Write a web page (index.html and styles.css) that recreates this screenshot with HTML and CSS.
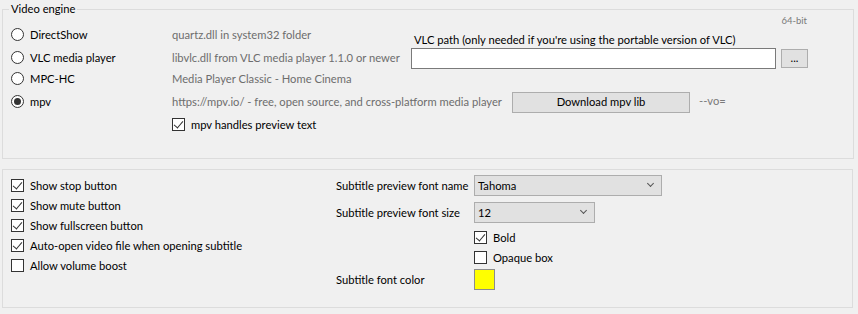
FILE: index.html
```html
<!DOCTYPE html>
<html>
<head>
<meta charset="utf-8">
<link rel="stylesheet" href="styles.css">
</head>
<body>
<div class="page">
  <section class="group group-engine">
    <div class="legend">Video engine</div>
    <div class="engine-grid">
      <div class="right-block">
        <div class="bitness">64-bit</div>
        <div class="vlc-label">VLC path (only needed if you're using the portable version of VLC)</div>
        <div class="vlc-row">
          <div class="textbox"></div>
          <div class="btn btn-browse">...</div>
        </div>
      </div>

      <div class="opt row1"><span class="radio"></span><span>DirectShow</span></div>
      <div class="desc row1">quartz.dll in system32 folder</div>

      <div class="opt row2"><span class="radio"></span><span>VLC media player</span></div>
      <div class="desc row2">libvlc.dll from VLC media player 1.1.0 or newer</div>

      <div class="opt row3"><span class="radio"></span><span>MPC-HC</span></div>
      <div class="desc row3">Media Player Classic - Home Cinema</div>

      <div class="opt row4"><span class="radio checked"></span><span>mpv</span></div>
      <div class="desc desc-wide row4">https://mpv.io/ - free, open source, and cross-platform media player</div>
      <div class="mpv-actions row4">
        <div class="btn btn-download">Download mpv lib</div>
        <span class="vo">--vo=</span>
      </div>

      <div class="opt opt-mpv row5"><span class="check checked"></span><span>mpv handles preview text</span></div>
    </div>
  </section>

  <section class="group group-misc">
    <div class="misc-left">
      <div class="opt line"><span class="check checked"></span><span>Show stop button</span></div>
      <div class="opt line"><span class="check checked"></span><span>Show mute button</span></div>
      <div class="opt line"><span class="check checked"></span><span>Show fullscreen button</span></div>
      <div class="opt line"><span class="check checked"></span><span>Auto-open video file when opening subtitle</span></div>
      <div class="opt line"><span class="check"></span><span>Allow volume boost</span></div>
    </div>
    <div class="misc-right">
      <div class="field field-name">
        <span class="field-label">Subtitle preview font name</span>
        <div class="combo combo-name"><span>Tahoma</span><span class="chev"></span></div>
      </div>
      <div class="field field-size">
        <span class="field-label">Subtitle preview font size</span>
        <div class="combo combo-size"><span>12</span><span class="chev"></span></div>
      </div>
      <div class="field field-bold">
        <div class="opt"><span class="check checked"></span><span>Bold</span></div>
      </div>
      <div class="field field-opaque">
        <div class="opt"><span class="check"></span><span>Opaque box</span></div>
      </div>
      <div class="field field-color">
        <span class="field-label">Subtitle font color</span>
        <div class="swatch"></div>
      </div>
    </div>
  </section>
</div>
</body>
</html>
```

FILE: styles.css
```css
* { box-sizing: border-box; }
html, body {
  margin: 0;
  padding: 0;
  background: #f0f0f0;
}
body {
  font-family: "Lato", "Noto Sans", sans-serif;
  font-size: 11.2px;
  color: #000;
  line-height: 16px;
}
.page {
  padding-left: 2px;
  width: 858px;
  height: 314px;
  overflow: hidden;
}
.group {
  border: 1px solid #dcdcdc;
}
.group-engine {
  margin-top: 9px;
  width: 852px;
  height: 150px;
}
.legend {
  margin: -9px 0 0 6px;
  padding: 0 2px;
  background: #f0f0f0;
  width: fit-content;
  line-height: 16px;
}
.engine-grid {
  display: grid;
  padding-left: 8px;
  grid-template-columns: 161px 239px 101px 1fr;
  grid-template-rows: 6px 22px 24px 18px 28px 18px;
  align-items: center;
}
.engine-grid > .opt, .engine-grid > .desc { padding-top: 1px; }
.right-block {
  grid-column: 3 / 5;
  grid-row: 1 / 4;
  align-self: start;
  display: flex;
  flex-direction: column;
}
.bitness {
  margin-top: -2px;
  line-height: 12px;
  font-size: 9.5px;
  color: #7a7a7a;
  text-align: right;
  padding-right: 46px;
}
.vlc-label {
  margin-top: 5px;
  padding-left: 3px;
  white-space: nowrap;
}
.vlc-row {
  margin-top: 0px;
  display: flex;
  align-items: center;
}
.textbox {
  width: 365px;
  height: 21px;
  background: #fff;
  border: 1px solid #7a7a7a;
}
.btn {
  background: #e1e1e1;
  border: 1px solid #adadad;
  display: flex;
  align-items: center;
  justify-content: center;
}
.btn-browse {
  margin-left: 5px;
  width: 27px;
  height: 19px;
  line-height: 14px;
  padding-bottom: 2px;
}
.row1 { grid-row: 2; }
.row2 { grid-row: 3; }
.row3 { grid-row: 4; }
.row4 { grid-row: 5; }
.row5 { grid-row: 6; }
.opt {
  display: flex;
  align-items: center;
  white-space: nowrap;
}
.opt > span:last-child { padding-top: 1px; }
.engine-grid > .opt { grid-column: 1; }
.engine-grid > .opt-mpv { grid-column: 2 / 5; }
.desc {
  grid-column: 2;
  color: #6d6d6d;
  white-space: nowrap;
}
.desc-wide { grid-column: 2 / 4; }
.mpv-actions {
  grid-column: 4;
  display: flex;
  align-items: center;
}
.btn-download {
  width: 178px;
  height: 21px;
  margin-top: 2px;
}
.vo {
  margin-left: 9px;
  color: #7a7a7a;
}
.radio {
  width: 13px;
  height: 13px;
  border: 1px solid #333;
  border-radius: 50%;
  background: #fff;
  margin-right: 6px;
  flex: none;
  display: flex;
  align-items: center;
  justify-content: center;
}
.radio.checked::after {
  content: "";
  width: 7px;
  height: 7px;
  border-radius: 50%;
  background: #333;
}
.check {
  width: 13px;
  height: 13px;
  border: 1px solid #333;
  background: #fff;
  margin-right: 6px;
  flex: none;
  position: relative;
}
.check.checked::after {
  content: "";
  position: absolute;
  left: 3px;
  top: 0px;
  width: 4px;
  height: 8px;
  border-right: 1.4px solid #333;
  border-bottom: 1.4px solid #333;
  transform: rotate(40deg);
}
.group-misc {
  margin-top: 10px;
  width: 851px;
  height: 139px;
  display: flex;
}
.misc-left {
  width: 333px;
  padding: 5px 0 0 8px;
  flex: none;
}
.line { height: 20px; }
.misc-right {
  display: flex;
  flex-direction: column;
}
.field {
  display: flex;
  align-items: center;
  height: 20px;
}
.field-label {
  width: 138px;
  flex: none;
  white-space: nowrap;
  padding-top: 1px;
}
.field-name { margin-top: 5px; }
.field-size { margin-top: 7px; }
.field-bold { margin-top: 5px; padding-left: 138px; }
.field-opaque { padding-left: 138px; }
.field-color { margin-top: 2px; }
.combo {
  height: 21px;
  background: #e1e1e1;
  border: 1px solid #adadad;
  display: flex;
  align-items: center;
  justify-content: space-between;
  padding: 1px 6px 0 3px;
}
.combo-name { width: 188px; }
.combo-size { width: 121px; }
.chev {
  width: 5px;
  height: 5px;
  border-right: 1px solid #555;
  border-bottom: 1px solid #555;
  transform: rotate(45deg);
  margin-top: -4px;
  margin-right: 2px;
}
.swatch {
  width: 21px;
  height: 21px;
  background: #ffff00;
  border: 1px solid #8c8c8c;
}
```
